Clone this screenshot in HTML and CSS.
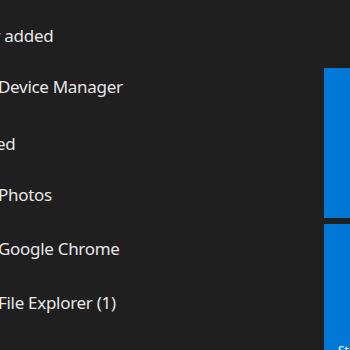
FILE: index.html
```html
<!DOCTYPE html>
<html>
<head>
    <title>Start</title>
    <meta charset="UTF-8">
    <link rel="stylesheet" href="styles.css">
</head>
<body>
    <div class="start">
        <div class="app-list">
            <div class="row header h51">Recently added</div>
            <div class="row item h57">Device Manager</div>
            <div class="row header h51">Most used</div>
            <div class="row item h54">Photos</div>
            <div class="row item h54">Google Chrome</div>
            <div class="row item h54">File Explorer (1)</div>
        </div>
        <div class="tiles">
            <div class="tile tall"></div>
            <div class="tile">
                <span class="tile-label">Store</span>
            </div>
        </div>
    </div>
</body>
</html>
```

FILE: styles.css
```css
html, body {
    margin: 0;
    padding: 0;
    height: 100%;
    overflow: hidden;
    background-color: #1f1f1f;
}

.start {
    display: flex;
    height: 350px;
    font-family: 'Noto Sans', 'Open Sans', sans-serif;
    color: #e6e6e6;
}

.app-list {
    width: 324px;
    padding-top: 9px;
    overflow: hidden;
}

.row {
    font-size: 17px;
    letter-spacing: -0.3px;
    white-space: nowrap;
}

.h51 { height: 51px; line-height: 54px; }
.h54 { height: 54px; line-height: 54px; }
.h57 { height: 57px; line-height: 54px; }

.header {
    margin-left: -65px;
}

.item {
    margin-left: -2px;
}

.tiles {
    flex: 1;
    display: flex;
    flex-direction: column;
    gap: 6px;
    padding-top: 68px;
}

.tile {
    position: relative;
    background-color: #0078d7;
    height: 150px;
    flex-shrink: 0;
}

.tile-label {
    position: absolute;
    left: 14px;
    bottom: 15px;
    font-size: 12px;
    color: #ffffff;
}
```
